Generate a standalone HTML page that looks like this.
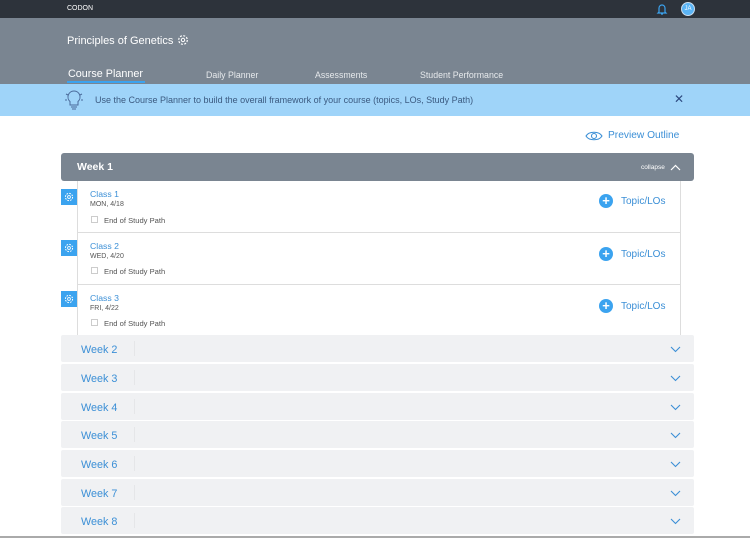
<!DOCTYPE html>
<html><head><style>
*{margin:0;padding:0;box-sizing:border-box}
body{width:750px;height:538px;overflow:hidden;background:#fff;font-family:"Liberation Sans",sans-serif;position:relative}
.a{position:absolute}
.top{left:0;top:0;width:750px;height:18px;background:#2d333b}
.hdr{left:0;top:18px;width:750px;height:66px;background:#7a8591}
.ban{left:0;top:84px;width:750px;height:32px;background:#9fd4f9}
.wk1{left:61px;top:153px;width:633px;height:28px;background:#7a8591;border-radius:3px}
.box{left:77px;top:181px;width:604px;height:154px;border-left:1px solid #ddd;border-right:1px solid #ddd}
.row{position:absolute;left:0;width:603px;border-bottom:1px solid #ddd}
.gear{left:61px;width:16px;height:16px;background:#3ba3ef}
.cl{position:absolute;left:12px;font-size:8.7px;color:#3b8fd6}
.dt{position:absolute;left:12px;font-size:7px;color:#555}
.cb{position:absolute;left:13px;width:7px;height:7px;border:1px solid #ccc}
.es{position:absolute;left:26px;font-size:7.6px;color:#555}
.tp{position:absolute;left:521px;width:14px;height:14px;border-radius:50%;background:#3ba3ef;color:#fff;font-size:13px;line-height:13px;text-align:center;font-weight:bold}
.tt{position:absolute;left:543px;font-size:10px;color:#3b8fd6}
.wk{position:absolute;left:61px;width:633px;height:27px;background:#f0f1f3;border-radius:2px}
.wk span{position:absolute;left:20px;top:9px;font-size:10.8px;color:#3b8fd6}
.wk i{position:absolute;left:73px;top:6px;width:1px;height:15px;background:#e5e6e8}
.wk svg{position:absolute;right:13px;top:11px}
</style></head><body>
<div class="a top"></div>
<div class="a" style="left:67px;top:5px;font-size:7px;color:#fff">CODON</div>
<svg class="a" style="left:656px;top:3px" width="12" height="12" viewBox="0 0 12 12"><path d="M3 9V5a3 3 0 0 1 6 0v4l1 1H2z M5 11h2" fill="none" stroke="#3ba3ef" stroke-width="1.2"/></svg>
<div class="a" style="left:681px;top:2px;width:14px;height:14px;border-radius:50%;background:#5ab4f5;border:1px solid #cde"></div>
<div class="a" style="left:683px;top:5px;width:10px;font-size:6px;color:#fff;text-align:center;line-height:8px">JA</div>
<div class="a hdr"></div>
<div class="a" style="left:67px;top:35px;font-size:11px;color:#fff">Principles of Genetics</div>
<svg class="a" style="left:177px;top:34px" width="12" height="12" viewBox="0 0 12 12"><circle cx="6" cy="6" r="4.3" fill="none" stroke="#fff" stroke-width="1.2" stroke-dasharray="2 1.4"/><circle cx="6" cy="6" r="1.7" fill="none" stroke="#fff"/></svg>
<div class="a" style="left:68px;top:68px;font-size:10.8px;color:#fff">Course Planner</div>
<div class="a" style="left:67px;top:81px;width:78px;height:2px;background:#3ba3ef"></div>
<div class="a" style="left:206px;top:70px;font-size:8.8px;color:#e6e9ec">Daily Planner</div>
<div class="a" style="left:315px;top:70px;font-size:8.8px;color:#e6e9ec">Assessments</div>
<div class="a" style="left:420px;top:70px;font-size:8.8px;color:#e6e9ec">Student Performance</div>
<div class="a ban"></div>
<svg class="a" style="left:63px;top:88px" width="22" height="24" viewBox="0 0 22 24"><path d="M11 3a6 6 0 0 0-4 10.5V17h8v-3.5A6 6 0 0 0 11 3zM8 19h6M9 21h4M3 6l2 1M19 6l-2 1M2 12h2M18 12h2" fill="none" stroke="#4a6a9a" stroke-width="1"/></svg>
<div class="a" style="left:95px;top:95px;font-size:9px;color:#3b5a80">Use the Course Planner to build the overall framework of your course (topics, LOs, Study Path)</div>
<div class="a" style="left:674px;top:92px;font-size:12px;color:#2d4a80">✕</div>
<svg class="a" style="left:585px;top:130px" width="18" height="12" viewBox="0 0 18 12"><path d="M1 6C4 1 14 1 17 6C14 11 4 11 1 6z" fill="none" stroke="#3b8fd6" stroke-width="1.1"/><circle cx="9" cy="6" r="2.5" fill="none" stroke="#3b8fd6" stroke-width="1.1"/></svg>
<div class="a" style="left:608px;top:130px;font-size:10.2px;color:#3b8fd6">Preview Outline</div>
<div class="a wk1"></div>
<div class="a" style="left:77px;top:161px;font-size:10.5px;color:#fff;font-weight:bold">Week 1</div>
<div class="a" style="left:641px;top:164px;font-size:6.5px;color:#fff">collapse</div>
<svg class="a" style="left:670px;top:164px" width="11" height="7" viewBox="0 0 11 7"><path d="M1 6L5.5 1.5L10 6" fill="none" stroke="#fff" stroke-width="1.2"/></svg>
<div class="a box">
 <div class="row" style="top:0;height:52px"><div class="cl" style="top:8px">Class 1</div><div class="dt" style="top:20px">MON, 4/18</div><div class="cb" style="top:35px"></div><div class="es" style="top:35px">End of Study Path</div><div class="tp" style="top:13px">+</div><div class="tt" style="top:15px">Topic/LOs</div></div>
 <div class="row" style="top:52px;height:52px"><div class="cl" style="top:8px">Class 2</div><div class="dt" style="top:20px">WED, 4/20</div><div class="cb" style="top:34px"></div><div class="es" style="top:34px">End of Study Path</div><div class="tp" style="top:14px">+</div><div class="tt" style="top:16px">Topic/LOs</div></div>
 <div class="row" style="top:104px;height:50px;border:none"><div class="cl" style="top:8px">Class 3</div><div class="dt" style="top:20px">FRI, 4/22</div><div class="cb" style="top:34px"></div><div class="es" style="top:34px">End of Study Path</div><div class="tp" style="top:14px">+</div><div class="tt" style="top:16px">Topic/LOs</div></div>
</div>
<div class="a gear" style="top:189px"></div><div class="a gear" style="top:240px"></div><div class="a gear" style="top:291px"></div>
<svg class="a" style="left:64px;top:192px" width="10" height="10" viewBox="0 0 12 12"><circle cx="6" cy="6" r="4.3" fill="none" stroke="#fff" stroke-width="1.2" stroke-dasharray="2 1.4"/><circle cx="6" cy="6" r="1.7" fill="none" stroke="#fff"/></svg>
<svg class="a" style="left:64px;top:243px" width="10" height="10" viewBox="0 0 12 12"><circle cx="6" cy="6" r="4.3" fill="none" stroke="#fff" stroke-width="1.2" stroke-dasharray="2 1.4"/><circle cx="6" cy="6" r="1.7" fill="none" stroke="#fff"/></svg>
<svg class="a" style="left:64px;top:294px" width="10" height="10" viewBox="0 0 12 12"><circle cx="6" cy="6" r="4.3" fill="none" stroke="#fff" stroke-width="1.2" stroke-dasharray="2 1.4"/><circle cx="6" cy="6" r="1.7" fill="none" stroke="#fff"/></svg>
<div class="wk" style="top:335px"><span>Week 2</span><i></i><svg width="11" height="7"><path d="M1 1L5.5 5.5L10 1" fill="none" stroke="#3b8fd6" stroke-width="1.1"/></svg></div>
<div class="wk" style="top:364px"><span>Week 3</span><i></i><svg width="11" height="7"><path d="M1 1L5.5 5.5L10 1" fill="none" stroke="#3b8fd6" stroke-width="1.1"/></svg></div>
<div class="wk" style="top:393px"><span>Week 4</span><i></i><svg width="11" height="7"><path d="M1 1L5.5 5.5L10 1" fill="none" stroke="#3b8fd6" stroke-width="1.1"/></svg></div>
<div class="wk" style="top:421px"><span>Week 5</span><i></i><svg width="11" height="7"><path d="M1 1L5.5 5.5L10 1" fill="none" stroke="#3b8fd6" stroke-width="1.1"/></svg></div>
<div class="wk" style="top:450px"><span>Week 6</span><i></i><svg width="11" height="7"><path d="M1 1L5.5 5.5L10 1" fill="none" stroke="#3b8fd6" stroke-width="1.1"/></svg></div>
<div class="wk" style="top:479px"><span>Week 7</span><i></i><svg width="11" height="7"><path d="M1 1L5.5 5.5L10 1" fill="none" stroke="#3b8fd6" stroke-width="1.1"/></svg></div>
<div class="wk" style="top:507px"><span>Week 8</span><i></i><svg width="11" height="7"><path d="M1 1L5.5 5.5L10 1" fill="none" stroke="#3b8fd6" stroke-width="1.1"/></svg></div>
<div class="a" style="left:0;top:536px;width:750px;height:2px;background:#aaa"></div>
</body></html>
